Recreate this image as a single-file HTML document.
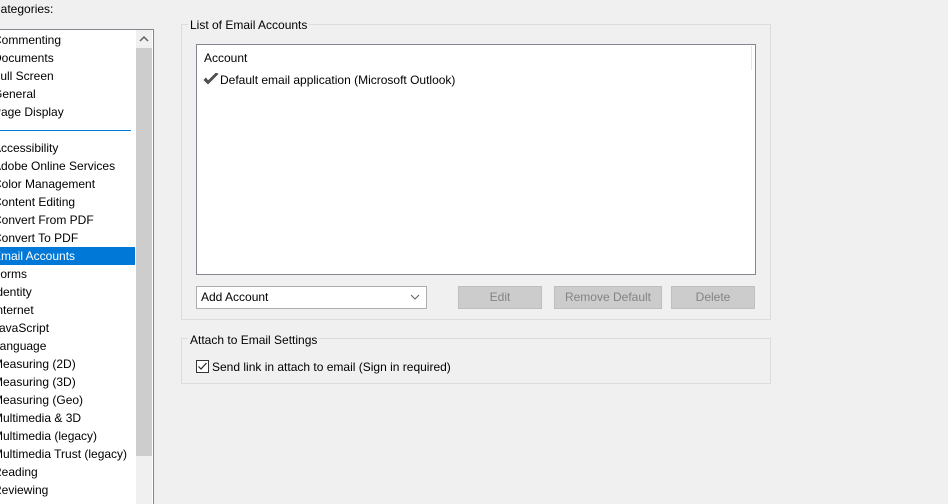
<!DOCTYPE html>
<html><head><style>
*{margin:0;padding:0;box-sizing:border-box}
html,body{width:948px;height:504px;overflow:hidden}
body{background:#f0f0f0;font-family:"Liberation Sans",sans-serif;font-size:12px;color:#000;position:relative}
.a{position:absolute}
.it{position:absolute;left:-7px;height:18px;line-height:18px;white-space:nowrap;width:142px}
.btn{position:absolute;top:286px;height:23px;background:#cccccc;border:1px solid #bfbfbf;color:#838383;text-align:center;line-height:21px}
.grp{position:absolute;border:1px solid #dcdcdc}
.gt{position:absolute;background:#f0f0f0;padding:0 2px;line-height:14px}
</style></head><body>
<div class="a" style="left:-8px;top:2px">Categories:</div>
<div class="a" style="left:-2px;top:29px;width:156px;height:480px;background:#fff;border:1px solid #828790"></div>
<div class="a" style="left:136px;top:30px;width:16px;height:474px;background:#f0f0f0"></div>
<div class="a" style="left:136px;top:48px;width:16px;height:408px;background:#cdcdcd"></div>
<svg class="a" style="left:138px;top:35px" width="12" height="8"><path d="M2 6 L6 2 L10 6" stroke="#606060" stroke-width="1.5" fill="none"/></svg>
<div class="a" style="left:0;top:130px;width:131px;height:1px;background:#0078d7"></div>
<div class="a" style="left:0;top:247px;width:135px;height:18px;background:#0078d7"></div>
<div class="it" style="top:31px">Commenting</div>
<div class="it" style="top:49px">Documents</div>
<div class="it" style="top:67px">Full Screen</div>
<div class="it" style="top:85px">General</div>
<div class="it" style="top:103px">Page Display</div>
<div class="it" style="top:139px">Accessibility</div>
<div class="it" style="top:157px">Adobe Online Services</div>
<div class="it" style="top:175px">Color Management</div>
<div class="it" style="top:193px">Content Editing</div>
<div class="it" style="top:211px">Convert From PDF</div>
<div class="it" style="top:229px">Convert To PDF</div>
<div class="it" style="top:247px;color:#fff">Email Accounts</div>
<div class="it" style="top:265px">Forms</div>
<div class="it" style="top:283px">Identity</div>
<div class="it" style="top:301px">Internet</div>
<div class="it" style="top:319px">JavaScript</div>
<div class="it" style="top:337px">Language</div>
<div class="it" style="top:355px">Measuring (2D)</div>
<div class="it" style="top:373px">Measuring (3D)</div>
<div class="it" style="top:391px">Measuring (Geo)</div>
<div class="it" style="top:409px">Multimedia &amp; 3D</div>
<div class="it" style="top:427px">Multimedia (legacy)</div>
<div class="it" style="top:445px">Multimedia Trust (legacy)</div>
<div class="it" style="top:463px">Reading</div>
<div class="it" style="top:481px">Reviewing</div>

<div class="grp" style="left:181px;top:24px;width:590px;height:296px"></div>
<div class="gt" style="left:188px;top:18px">List of Email Accounts</div>
<div class="a" style="left:196px;top:44px;width:560px;height:231px;background:#fff;border:1px solid #828790"></div>
<div class="a" style="left:751px;top:46px;width:1px;height:24px;background:#e5e5e5"></div>
<div class="a" style="left:204px;top:51px">Account</div>
<svg class="a" style="left:203px;top:73px" width="16" height="13"><path d="M1 7 L5 11 L15 1 L13 0 L5 8 L3 5 Z" fill="#555" stroke="#333" stroke-width="0.6"/></svg>
<div class="a" style="left:220px;top:73px">Default email application (Microsoft Outlook)</div>
<div class="a" style="left:196px;top:286px;width:231px;height:23px;background:#fff;border:1px solid #adadad"></div>
<div class="a" style="left:201px;top:290px">Add Account</div>
<svg class="a" style="left:410px;top:293px" width="10" height="8"><path d="M1 2 L5 6 L9 2" stroke="#606060" fill="none"/></svg>
<div class="btn" style="left:458px;width:84px">Edit</div>
<div class="btn" style="left:554px;width:108px">Remove Default</div>
<div class="btn" style="left:671px;width:84px">Delete</div>

<div class="grp" style="left:181px;top:338px;width:590px;height:46px"></div>
<div class="gt" style="left:188px;top:333px">Attach to Email Settings</div>
<div class="a" style="left:196px;top:360px;width:13px;height:13px;background:#fff;border:1px solid #333"></div>
<svg class="a" style="left:196px;top:360px" width="13" height="13"><path d="M2.5 6.5 L5 9 L10.5 3" stroke="#222" stroke-width="1.2" fill="none"/></svg>
<div class="a" style="left:212px;top:360px">Send link in attach to email (Sign in required)</div>
</body></html>
